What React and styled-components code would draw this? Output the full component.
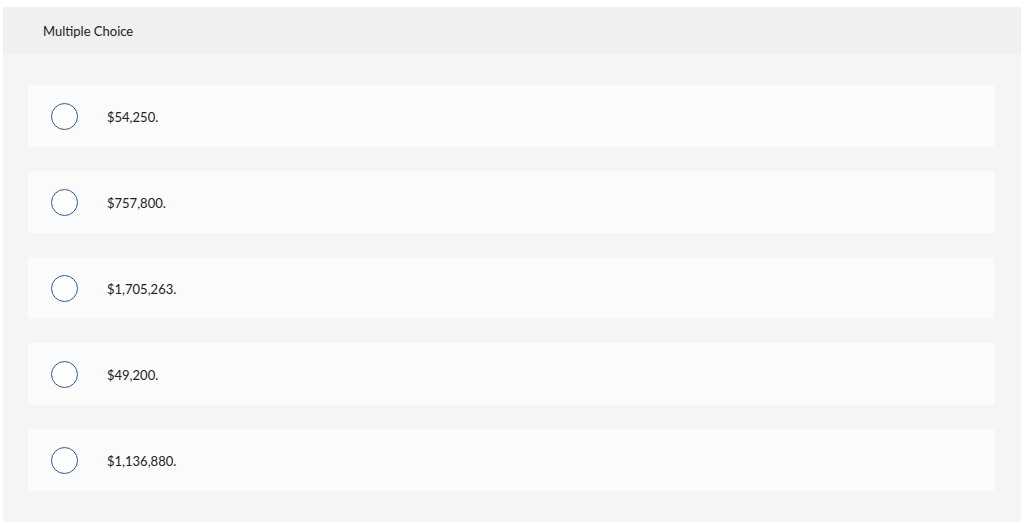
import React from "react";
import styled, { createGlobalStyle } from "styled-components";

const Global = createGlobalStyle`
  html, body { margin: 0; padding: 0; background: #ffffff; }
  body { font-family: "Lato", "Open Sans", sans-serif; color: #222; }
`;

const Page = styled.div`
  padding: 7px 3px 2px 3px;
`;

const Panel = styled.section`
  background: #f5f5f5;
  border-radius: 2px;
`;

const Header = styled.header`
  height: 47px;
  background: #f0f0f0;
  display: flex;
  align-items: center;
  padding-left: 40px;
  font-size: 13px;
  color: #222;
`;

const Options = styled.div`
  display: flex;
  flex-direction: column;
  gap: 24px;
  padding: 31px 26px 31px 25px;
`;

const Option = styled.label`
  height: 62px;
  background: #fbfbfb;
  border-radius: 2px;
  display: flex;
  align-items: center;
  padding-left: 23px;
  gap: 29px;
  cursor: pointer;
`;

const Radio = styled.span`
  box-sizing: border-box;
  width: 27px;
  height: 27px;
  border-radius: 50%;
  border: 1.5px solid #2c5a96;
  background: #ffffff;
  flex: none;
`;

const Text = styled.span`
  font-size: 13px;
  color: #222;
  padding-top: 1px;
`;

const answers = ["$54,250.", "$757,800.", "$1,705,263.", "$49,200.", "$1,136,880."];

export default function App() {
  return (
    <>
      <Global />
      <Page>
        <Panel>
          <Header>Multiple Choice</Header>
          <Options>
            {answers.map((a) => (
              <Option key={a}>
                <Radio />
                <Text>{a}</Text>
              </Option>
            ))}
          </Options>
        </Panel>
      </Page>
    </>
  );
}
